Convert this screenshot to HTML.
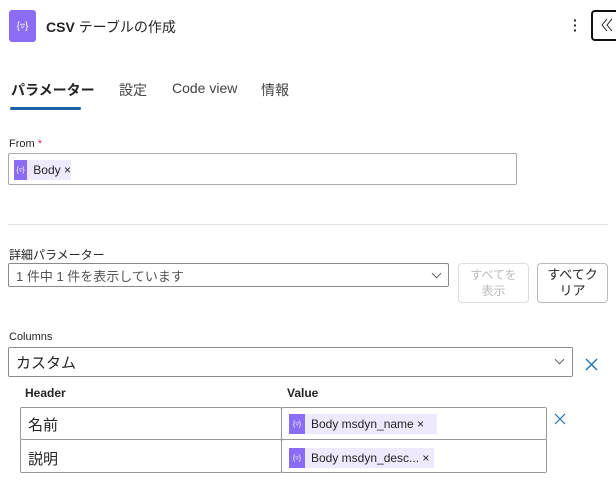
<!DOCTYPE html>
<html><head><meta charset="utf-8"><style>
*{box-sizing:border-box;margin:0;padding:0}
body{width:616px;height:485px;overflow:hidden;background:#fff;font-family:"Liberation Sans","Noto Sans CJK JP",sans-serif;color:#242424;position:relative;font-size:12px}
.a{position:absolute}
.ic{background:#8a6cf5;border-radius:2px;display:flex;align-items:center;justify-content:center;color:#fff}
.chip{position:absolute;background:#efe9fd;height:20px;display:flex;align-items:center;font-size:12px;white-space:nowrap}
.chip .ic{width:16px;height:20px;font-size:7px;border-radius:0;margin-right:6px}
.box{position:absolute;border:1px solid #8a8a8a;border-radius:2px}
.chev{position:absolute;width:7px;height:7px;border-right:1px solid #666;border-bottom:1px solid #666;transform:rotate(45deg)}
svg.x{position:absolute}
</style></head><body>
<div class="a ic" style="left:9px;top:10px;width:27px;height:32px;border-radius:3px;font-size:10px">{▿}</div>
<div class="a" style="left:46px;top:17px;font-size:14px"><b>CSV</b> テーブルの作成</div>
<div class="a" style="left:573px;top:18px;width:3px;line-height:5px;font-size:14px;font-weight:bold">·<br>·<br>·</div>
<div class="a" style="left:591px;top:10px;width:30px;height:31px;border:2px solid #111;border-radius:4px"></div>
<svg class="x" style="left:601px;top:18px" width="12" height="14" viewBox="0 0 12 14"><path d="M6 1L1 7L6 13M11 1L6 7L11 13" stroke="#333" fill="none" stroke-width="1"/></svg>
<div class="a" style="left:11px;top:80px;font-size:14px;font-weight:bold">パラメーター</div>
<div class="a" style="left:10px;top:107px;width:71px;height:3px;background:#1e63a6;border-radius:2px"></div>
<div class="a" style="left:119px;top:80px;font-size:14px;color:#444">設定</div>
<div class="a" style="left:172px;top:80px;font-size:14px;color:#444">Code view</div>
<div class="a" style="left:261px;top:80px;font-size:14px;color:#444">情報</div>
<div class="a" style="left:9px;top:138px;font-size:11px">From <span style="color:#c4314b">*</span></div>
<div class="box" style="left:8px;top:153px;width:509px;height:32px;border-color:#aaa"></div>
<div class="chip" style="left:14px;top:160px;width:57px"><div class="ic">{▿}</div>Body ×</div>
<div class="a" style="left:8px;top:224px;width:600px;height:1px;background:#e3e3e3"></div>
<div class="a" style="left:9px;top:246px;font-size:12px">詳細パラメーター</div>
<div class="box" style="left:8px;top:263px;width:441px;height:24px"></div>
<div class="a" style="left:16px;top:266px;font-size:13px;color:#555">1 件中 1 件を表示しています</div>
<div class="chev" style="left:433px;top:270px"></div>
<div class="box" style="left:458px;top:263px;width:71px;height:40px;border-color:#ddd;border-radius:4px;color:#bbb;text-align:center;font-size:12px;line-height:16px;padding-top:3px">すべてを<br>表示</div>
<div class="box" style="left:537px;top:263px;width:71px;height:40px;border-color:#bbb;border-radius:4px;text-align:center;font-size:13px;line-height:16px;padding-top:3px">すべてク<br>リア</div>
<div class="a" style="left:9px;top:331px;font-size:11px">Columns</div>
<div class="box" style="left:8px;top:347px;width:565px;height:30px"></div>
<div class="a" style="left:16px;top:352px;font-size:15px">カスタム</div>
<div class="chev" style="left:556px;top:356px"></div>
<svg class="x" style="left:585px;top:358px" width="13" height="13" viewBox="0 0 13 13"><path d="M1 1L12 12M12 1L1 12" stroke="#1e6fb0" stroke-width="1.3"/></svg>
<div class="a" style="left:25px;top:386px;font-size:12px;font-weight:bold">Header</div>
<div class="a" style="left:287px;top:386px;font-size:12px;font-weight:bold">Value</div>
<div class="box" style="left:20px;top:407px;width:262px;height:33px;border-color:#999"></div>
<div class="box" style="left:281px;top:407px;width:266px;height:33px;border-color:#999"></div>
<div class="box" style="left:20px;top:439px;width:262px;height:34px;border-color:#999"></div>
<div class="box" style="left:281px;top:439px;width:266px;height:34px;border-color:#999"></div>
<div class="a" style="left:28px;top:414px;font-size:15px">名前</div>
<div class="a" style="left:28px;top:448px;font-size:15px">説明</div>
<div class="chip" style="left:289px;top:414px;width:148px"><div class="ic">{▿}</div>Body msdyn_name ×</div>
<div class="chip" style="left:289px;top:448px;width:145px"><div class="ic">{▿}</div>Body msdyn_desc... ×</div>
<svg class="x" style="left:554px;top:413px" width="12" height="12" viewBox="0 0 12 12"><path d="M1 1L11 11M11 1L1 11" stroke="#1e6fb0" stroke-width="1.2"/></svg>
</body></html>
